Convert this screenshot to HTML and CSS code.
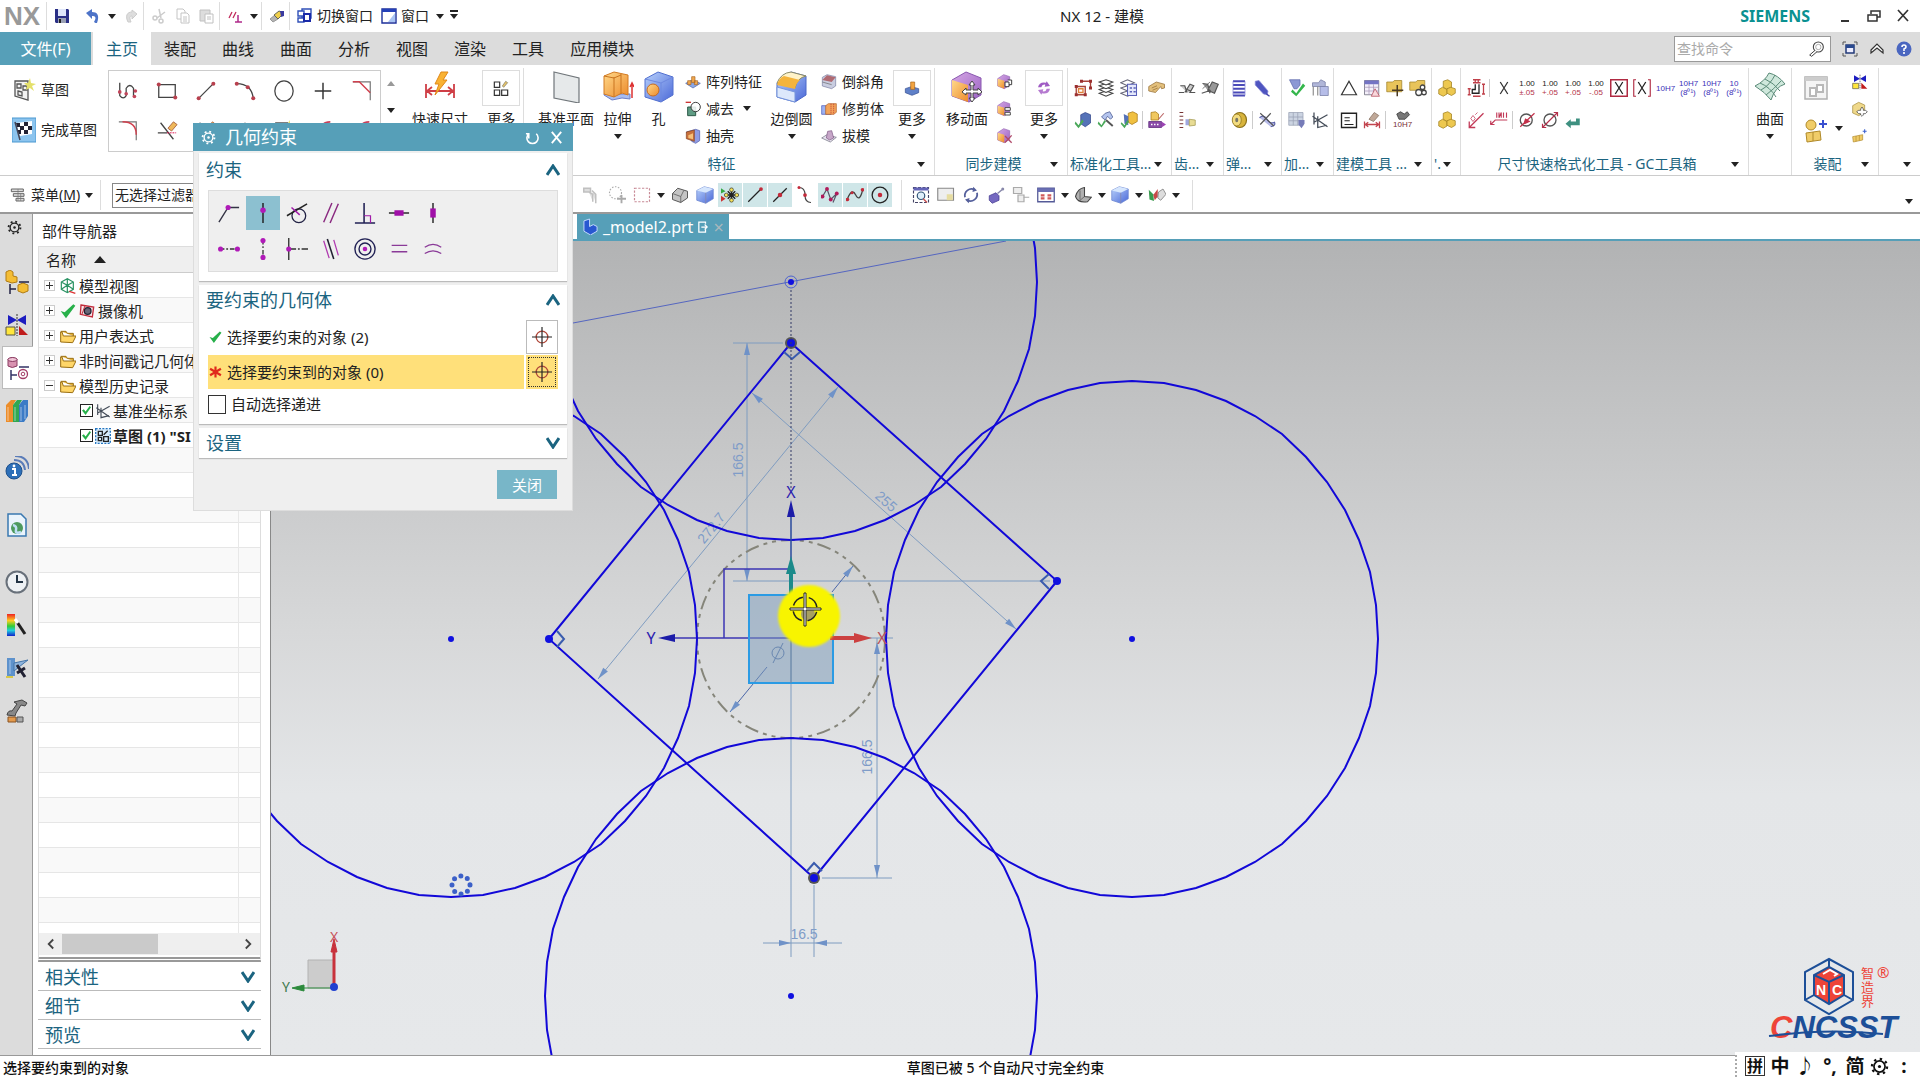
FILE: index.html
```html
<!DOCTYPE html>
<html lang="zh-CN">
<head>
    <meta charset="UTF-8">
    <meta name="viewport" content="width=device-width, initial-scale=1.0">
    <title>NX 12 - 建模</title>
    <link rel="stylesheet" href="styles.css">
</head>
<body>
    <svg class="sprite" aria-hidden="true">
        <defs>
            <linearGradient id="gBlue" x1="0" y1="0" x2="1" y2="1"><stop offset="0" stop-color="#b9d2fb"/><stop offset="1" stop-color="#4a68d8"/></linearGradient>
            <linearGradient id="gOrange" x1="0" y1="0" x2="1" y2="1"><stop offset="0" stop-color="#ffd98a"/><stop offset="1" stop-color="#ec8a2c"/></linearGradient>
            <linearGradient id="gPurple" x1="0" y1="0" x2="1" y2="1"><stop offset="0" stop-color="#d6a8e4"/><stop offset="1" stop-color="#9b62c4"/></linearGradient>
            <linearGradient id="gRainbow" x1="0" y1="0" x2="0" y2="1"><stop offset="0" stop-color="#e22"/><stop offset=".3" stop-color="#fc2"/><stop offset=".55" stop-color="#3c3"/><stop offset=".75" stop-color="#2cd"/><stop offset="1" stop-color="#12c"/></linearGradient>
        </defs>
        <symbol id="i-save" viewBox="0 0 16 16"><path d="M1 1h13l1 1v13H2l-1-1z" fill="#2a2f86"/><path d="M4 1h8v7H4z" fill="#dfe6fa"/><path d="M4 10h8v5H4z" fill="#9aa0b4"/><path d="M5 11h2v4H5z" fill="#222"/></symbol>
        <symbol id="i-undo" viewBox="0 0 16 16"><path d="M1 5l6-4v3c5 0 8 3 5 11-1 0-2 0-3-1 3-5 1-6-2-6v3z" fill="#4d73c8"/></symbol>
        <symbol id="i-redo" viewBox="0 0 16 16"><path d="M14 6L9 2v2C4 4 2 8 5 14h3C6 9 7 8 9 8v3z" fill="#ddd" stroke="#ccc"/></symbol>
        <symbol id="i-cut" viewBox="0 0 16 16"><g fill="none" stroke="#ccc" stroke-width="1.5"><path d="M8 1l2 9M14 4L6 10"/><circle cx="4" cy="10" r="2"/><circle cx="10" cy="13" r="2"/></g></symbol>
        <symbol id="i-copy" viewBox="0 0 16 16"><g fill="#fff" stroke="#c4c4c4"><path d="M2 1h6l2 2v8H2z"/><path d="M6 5h6l2 2v8H6z"/><path d="M8 9h4M8 11h4M8 13h4"/></g></symbol>
        <symbol id="i-paste" viewBox="0 0 16 16"><g fill="#ddd" stroke="#c0c0c0"><path d="M1 2h10v11H1z"/><path d="M6 6h8v9H6z" fill="#fff"/><path d="M8 9h4M8 11h4"/></g></symbol>
        <symbol id="i-con" viewBox="0 0 16 16"><path d="M2 10l3-6M6 10l3-6" stroke="#c22c5c" stroke-width="1.3"/><path d="M8 14h7M11 14V7" stroke="#b02a8a" stroke-width="1.5"/></symbol>
        <symbol id="i-pen" viewBox="0 0 16 16"><path d="M1 11l5-4 3 4-5 3z" fill="#b4b4b4" stroke="#999"/><path d="M5 7l5-4 5 2-6 6z" fill="#efcf4a" stroke="#665"/><path d="M11 3h4v5l-3 1z" fill="#3a3aa0"/></symbol>
        <symbol id="i-switch" viewBox="0 0 16 16"><g fill="#fff" stroke="#3050b8" stroke-width="1.4"><path d="M5 1h9v9H5z"/><path d="M1 3h6v5H1zM1 10h6v4H1z"/><path d="M7 6h6v7H7z" stroke="#1a2aa8" stroke-width="2"/></g></symbol>
        <symbol id="i-window" viewBox="0 0 16 16"><path d="M1 1h14v14H1z" fill="#fff" stroke="#1c2f9a" stroke-width="1.4"/><path d="M1 1h14v3H1z" fill="#2440b8"/><path d="M14 5v9H7z" fill="#a8c4f4"/></symbol>

        <symbol id="i-sketch" viewBox="0 0 24 24"><g fill="#f2f2f2" stroke="#555" stroke-width="1.3"><path d="M3 3h13v19L3 18z"/><path d="M5 6h4v4H5zM11 8h4v4h-4zM6 13l4 1v4l-4-1z"/></g><path d="M18 0l1 5 5 1-4 2 2 5-4-3-4 2 1-4-3-3 4 0z" fill="#e4e06a"/></symbol>
        <symbol id="i-finish" viewBox="0 0 24 24"><path d="M0 0h24v24H0z" fill="#8cc4ee"/><path d="M0 0h24v24H0z" fill="none" stroke="#4b98d0"/><path d="M4 5l16-2v13L8 18z" fill="#fff"/><path d="M4 5l4 0v4H5zM12 4h4v4h-4zM8 8h4v4H8zM16 8h4v4h-4zM5 12h4v4H7zM12 12h4v4h-4z" fill="#223"/><path d="M3 4l5 18" stroke="#445" stroke-width="1.5"/></symbol>
        <symbol id="i-profile" viewBox="0 0 24 24"><path d="M3 3v14q4 5 7 0V9q4-6 8 0v9" fill="none" stroke="#444" stroke-width="1.4"/><g fill="#c2455a"><circle cx="3" cy="13" r="2"/><circle cx="10" cy="15" r="2"/><circle cx="19" cy="18" r="2"/><circle cx="20" cy="12" r="2"/></g></symbol>
        <symbol id="i-rect" viewBox="0 0 24 24"><path d="M3 5h18v14H3z" fill="none" stroke="#444" stroke-width="1.4"/><circle cx="3" cy="5" r="2.2" fill="#b8404e"/><circle cx="21" cy="19" r="2.2" fill="#b8404e"/></symbol>
        <symbol id="i-line" viewBox="0 0 24 24"><path d="M4 20L20 4" stroke="#444" stroke-width="1.4"/><circle cx="4" cy="20" r="2.2" fill="#b8404e"/><circle cx="20" cy="4" r="2.2" fill="#b8404e"/></symbol>
        <symbol id="i-arc" viewBox="0 0 24 24"><path d="M3 4q16 0 18 16" fill="none" stroke="#444" stroke-width="1.4"/><g fill="#b8404e"><circle cx="3" cy="4" r="2.2"/><circle cx="15" cy="8" r="2.2"/><circle cx="21" cy="20" r="2.2"/></g></symbol>
        <symbol id="i-circle" viewBox="0 0 24 24"><ellipse cx="12" cy="12" rx="10" ry="11" fill="none" stroke="#444" stroke-width="1.4"/></symbol>
        <symbol id="i-plus" viewBox="0 0 24 24"><path d="M12 3v18M3 12h18" stroke="#333" stroke-width="1.6"/></symbol>
        <symbol id="i-chamfer" viewBox="0 0 24 24"><path d="M2 2h19v20" fill="none" stroke="#777" stroke-width="1.3"/><path d="M2 2h7l12 12" fill="none" stroke="#d0404e" stroke-width="1.6"/></symbol>
        <symbol id="i-fillet" viewBox="0 0 24 24"><path d="M2 2h19v20" fill="none" stroke="#777" stroke-width="1.3"/><path d="M6 2q15 0 15 14" fill="none" stroke="#d0404e" stroke-width="1.6"/></symbol>
        <symbol id="i-trim" viewBox="0 0 24 24"><path d="M2 14h10M5 3l14 18" stroke="#444" stroke-width="1.4"/><path d="M12 14h10" stroke="#d04" stroke-dasharray="2 1"/><path d="M13 9l6-7 4 3-6 7z" fill="#efb85a" stroke="#a64"/></symbol>
        <symbol id="i-conic" viewBox="0 0 24 24"><path d="M2 20Q8 2 20 2" fill="none" stroke="#c8405a" stroke-width="2"/></symbol>
        <symbol id="i-quick" viewBox="0 0 32 32"><path d="M2 13v14M30 13v14M3 20h26M8 16l-5 4 5 4M24 16l5 4-5 4" fill="none" stroke="#cf3e46" stroke-width="1.8"/><path d="M17 1h7l-5 8h4L11 24l4-11h-4z" fill="#f9b233" stroke="#e08818"/></symbol>
        <symbol id="i-more" viewBox="0 0 24 24"><g fill="none" stroke="#333" stroke-width="1.800"><path d="M2 3h8v8H2zM2 15h8v8H2zM13 15h9v8h-9z"/></g><path d="M14 9l5-7 3 2-6 7z" fill="#e8c468" stroke="#776"/></symbol>
        <symbol id="i-plane" viewBox="0 0 32 32"><path d="M4 1l25 6v25L4 27z" fill="#e6e9ea" stroke="#70767a" stroke-width="1.2"/></symbol>
        <symbol id="i-extrude" viewBox="0 0 32 32"><path d="M2 24l8 5 10-2 8 1 0-5H2z" fill="#a9bdf0" stroke="#6f80c8"/><path d="M2 5l10-4 14 3v20l-6-2-8 4-10-3z" fill="url(#gOrange)" stroke="#d27a22"/><path d="M12 6v20M19 3v20M2 5l10 2 7-3" fill="none" stroke="#c97420"/><path d="M30 27V13M28 16l2-4 2 4" stroke="#d33" fill="none" stroke-width="1.500"/></symbol>
        <symbol id="i-hole" viewBox="0 0 32 32"><path d="M2 8l13-7 15 5v18l-12 7L2 26z" fill="url(#gBlue)" stroke="#5270d0"/><path d="M2 8l16 4 12-6M18 12v19" fill="none" stroke="#6d88e0"/><circle cx="10" cy="19" r="6" fill="url(#gOrange)" stroke="#c66b22"/></symbol>
        <symbol id="i-pattern" viewBox="0 0 24 24"><path d="M1 14l10-5 12 5-11 7z" fill="#8aa8e8" stroke="#4d64a8"/><path d="M4 10h5v6H4zM10 4h5v9h-5zM14 10h5v6h-5z" fill="#f0a850" stroke="#a86420"/></symbol>
        <symbol id="i-subtract" viewBox="0 0 24 24"><path d="M1 2h8" stroke="#c33" stroke-width="2"/><path d="M4 9h12v13H4z" fill="#5f9c84" stroke="#2d5a48" stroke-width="1.5"/><circle cx="16" cy="9" r="7" fill="#fff" fill-opacity=".85" stroke="#333" stroke-width="1.4"/></symbol>
        <symbol id="i-shell" viewBox="0 0 24 24"><path d="M2 6l14-4 6 2v15l-6 4-6-3z" fill="#8f9ce4" stroke="#4a56a8"/><path d="M2 6l12-3v17L2 16z" fill="#c8703a" stroke="#84401c"/><path d="M5 11l7-3v9l-7-2z" fill="#f6c078"/></symbol>
        <symbol id="i-edge" viewBox="0 0 32 32"><path d="M1 12l14-11 15 4v19l-11 7L1 26z" fill="url(#gBlue)" stroke="#4a68c8"/><path d="M1 12Q5 2 15 1l15 4q-9 2-11 12z" fill="#fff3c8" stroke="#8a8a66"/><path d="M1 14q2-7 7-9l16 4q-4 3-5 9z" fill="#f4b43c"/><path d="M1 16l18 5v10L1 26z" fill="#dce8fb" stroke="#7796dc"/></symbol>
        <symbol id="i-chamf" viewBox="0 0 24 24"><path d="M2 5l7-4 13 3v14l-6 4-14-4z" fill="#c9cde0" stroke="#777ca0"/><path d="M2 9L9 2l13 3-6 7z" fill="#b06a72"/><path d="M2 12l14 4" stroke="#666"/></symbol>
        <symbol id="i-body" viewBox="0 0 24 24"><path d="M1 7h14v13H1z" fill="#9db2f2" stroke="#4454b8"/><path d="M7 7l4-3h12v13l-4 3H7z" fill="#f3a45a" stroke="#b05c20"/><path d="M15 4v16M19 4v16" stroke="#b33" stroke-dasharray="2 1"/></symbol>
        <symbol id="i-draft" viewBox="0 0 24 24"><path d="M1 15l8-5 14 4-9 7z" fill="#e8e4f0" stroke="#667"/><path d="M8 15l2-10 6-1 3 11-6 3z" fill="#c6a6c8" stroke="#7a5580"/></symbol>
        <symbol id="i-featmore" viewBox="0 0 24 24"><path d="M2 13l9-3 11 3v6l-10 4-10-4z" fill="#5f80c8" stroke="#30488c"/><path d="M10 3h6v11h-6z" fill="#f3a440" stroke="#a86418"/></symbol>
        <symbol id="i-moveface" viewBox="0 0 32 32"><path d="M1 9l14-8 15 6v17l-12 7L1 25z" fill="url(#gPurple)" stroke="#8a58b0"/><path d="M1 9l16 5v17L1 25z" fill="url(#gOrange)"/><path d="M21 10l3 4h-2v5h5v-2l4 4-4 3v-2h-5v5h2l-3 4-3-4h2v-5h-5v2l-4-3 4-4v2h5v-5h-2z" fill="#fff" stroke="#444"/></symbol>
        <symbol id="i-face2" viewBox="0 0 24 24"><path d="M1 7l9-6 9 3v13l-8 5-10-4z" fill="url(#gPurple)" stroke="#9464b4"/><path d="M1 7l10 3v12L1 18z" fill="url(#gOrange)"/><path d="M12 12h6v7h-6zM16 9h6v7h-4" fill="#fff" stroke="#333" stroke-width="1.4"/></symbol>
        <symbol id="i-face3" viewBox="0 0 24 24"><path d="M1 7l9-6 9 3v13l-8 5-10-4z" fill="url(#gPurple)" stroke="#9464b4"/><path d="M1 7l10 3v12L1 18z" fill="url(#gOrange)"/><path d="M12 10h8v4h-8zM12 17h8v4h-8z" fill="#fff" stroke="#444" stroke-width="1.4"/></symbol>
        <symbol id="i-face4" viewBox="0 0 24 24"><path d="M1 7l9-6 9 3v13l-8 5-10-4z" fill="url(#gPurple)" stroke="#9464b4"/><path d="M1 7l10 3v12L1 18z" fill="url(#gOrange)"/><path d="M12 12l10 10M22 11L12 22" stroke="#b04a6a" stroke-width="2"/></symbol>
        <symbol id="i-sync" viewBox="0 0 24 24"><path d="M3 11q2-9 12-7l1-2 5 7-8 1 1-3q-5-1-6 4z" fill="#a05cc4"/><path d="M21 13q-2 9-12 7l-1 2-5-7 8-1-1 3q5 1 6-4z" fill="#b57ad0"/></symbol>

        <symbol id="i-std" viewBox="0 0 24 24"><g fill="none" stroke="#a8443a" stroke-width="1.800"><path d="M3 10h12v11H3z"/><path d="M10 3h12v9"/><path d="M6 13h6v5H6z" stroke="#e0803a"/></g><g fill="#9a2f2f"><path d="M1 8h4v4H1zM13 19h4v4h-4zM8 1h4v4H8zM20 1h4v4h-4zM20 10h4v4h-4zM1 19h4v4H1z"/></g></symbol>
        <symbol id="i-layers" viewBox="0 0 24 24"><g fill="#fff" stroke="#444" stroke-width="1.5"><path d="M3 19l9-3 9 3-9 4z"/><path d="M3 14l9-3 9 3-9 4z"/><path d="M3 9l9-3 9 3-9 4z"/><path d="M3 4l9-3 9 3-9 4z"/></g></symbol>
        <symbol id="i-layers2" viewBox="0 0 24 24"><g fill="#fff" stroke="#667" stroke-width="1.5"><path d="M1 19l9-3 9 3-9 4zM1 12l9-3 9 3-9 4zM1 5l9-4 9 4-9 4z"/></g><path d="M10 7h12v15H10z" fill="#e4e8fb" stroke="#5a60b8" stroke-width="1.4"/><path d="M13 12h3M18 12h3M13 17h3M18 17h3" stroke="#5a60b8" stroke-width="2"/></symbol>
        <symbol id="i-hand" viewBox="0 0 24 24"><path d="M1 10l10-6 11 3v5l-4 1-1-3-7 8-9-2z" fill="#e3c07c" stroke="#97703a"/><path d="M5 12l7-3M6 15l7-3" stroke="#97703a"/></symbol>
        <symbol id="i-attr1" viewBox="0 0 24 24"><path d="M9 5l6-3 7 3v11l-7 5-6-4z" fill="#5572b8" stroke="#34488c"/><path d="M2 14l4 5 5-8 2 3-7 9-5-6z" fill="#4aa85a"/></symbol>
        <symbol id="i-attr2" viewBox="0 0 24 24"><path d="M6 8l5-5 6-2 4 7-3 3-4-4-3 5z" fill="#b4c4ee" stroke="#44548c"/><path d="M12 12l9 8" stroke="#555" stroke-width="2.500"/><path d="M2 14l4 5 4-7 2 2-6 8-5-5z" fill="#4aa85a"/></symbol>
        <symbol id="i-attr3" viewBox="0 0 24 24"><path d="M11 3l6-2 6 3v10l-7 4-5-3z" fill="#f0c040" stroke="#a87a18"/><path d="M5 4l6 3v12l-5-2z" fill="#5572b8"/><path d="M2 15l4 4 4-7 2 2-6 9-5-6z" fill="#4aa85a"/></symbol>
        <symbol id="i-export" viewBox="0 0 24 24"><path d="M4 2l6-1 4 3v8H4z" fill="#f0c860" stroke="#a87a18"/><path d="M14 11l7-8" stroke="#b66" stroke-width="1.500"/><path d="M1 14h17v8H1z" fill="#8a4aa8" stroke="#5a2a78"/><path d="M4 18h2M8 18h2M12 18h2" stroke="#fff" stroke-width="2"/><path d="M18 14l6 4-6 4z" fill="#9c44b4"/></symbol>
        <symbol id="i-gear1" viewBox="0 0 24 24"><path d="M1 18h7M3 9h6l3 9M9 18l7-11 5 2-5 9h7M12 14l5 2" fill="#ccc" stroke="#555" stroke-width="1.600"/></symbol>
        <symbol id="i-gear2" viewBox="0 0 24 24"><path d="M1 19l12-4M2 6l7 1 3 12M9 15l6-11 8 3-5 12z" fill="#999" stroke="#555" stroke-width="1.600"/><path d="M2 13L12 4" stroke="#555"/></symbol>
        <symbol id="i-gear3" viewBox="0 0 24 24"><path d="M2 2h5M2 7h5M2 12h5M2 17h5M2 22h5" stroke="#733" stroke-width="1.600"/><path d="M10 11h6v8h-6z" fill="#a0a8e0"/><path d="M15 11l8 1v7l-8 1z" fill="#e8dc94" stroke="#a39a52"/></symbol>
        <symbol id="i-spring" viewBox="0 0 24 24"><path d="M4 3h16M4 8h16M4 13h16M4 18h16M4 22h16" stroke="#4a4ab8" stroke-width="2.600"/><path d="M4 3v19M20 3v19" stroke="#8a8ad8"/></symbol>
        <symbol id="i-spring2" viewBox="0 0 24 24"><path d="M3 3l5-1 12 14-1 5-5-1L3 8z" fill="#4f55c0" stroke="#8a8ad8"/><path d="M18 20l4 3" stroke="#44a" stroke-width="2"/></symbol>
        <symbol id="i-coil" viewBox="0 0 24 24"><ellipse cx="13" cy="12" rx="9" ry="10" fill="#d8b43c" stroke="#8a701a" stroke-width="1.600"/><ellipse cx="9" cy="12" rx="6" ry="8" fill="#f3dc80" stroke="#8a701a"/><ellipse cx="9" cy="12" rx="2" ry="3" fill="#776"/></symbol>
        <symbol id="i-cutspring" viewBox="0 0 24 24"><path d="M2 9q6-5 10 2t10 4q2 5-5 6" fill="#b8bce8" stroke="#5a60a8" stroke-width="1.500"/><path d="M3 3l18 17M17 3L3 18" stroke="#555" stroke-width="1.500"/></symbol>
        <symbol id="i-mach" viewBox="0 0 24 24"><path d="M2 1h14v7l-4 5-4 0z" fill="#8c98d4" stroke="#626cae"/><path d="M6 14l5 5 9-13 3 3-12 14-7-6z" fill="#34b64c"/></symbol>
        <symbol id="i-mach2" viewBox="0 0 24 24"><path d="M2 5h8l3-4 6 3v6H2z" fill="#b0b6d8" stroke="#767ca4"/><path d="M3 10v12M9 10v12" stroke="#888" stroke-width="1.500"/><path d="M12 10h11v12H12z" fill="#b6bde8" stroke="#767ca4"/></symbol>
        <symbol id="i-grid" viewBox="0 0 24 24"><path d="M1 2h19v17H1z" fill="#ccd4e2" stroke="#99a2b4"/><path d="M1 8h19M1 13h19M7 2v17M13 2v17" stroke="#99a2b4"/><path d="M14 12h8v5l-4 6-4-5z" fill="#767cb8"/></symbol>
        <symbol id="i-csys" viewBox="0 0 24 24"><path d="M4 2v16M4 15L22 5M2 7l20 14M9 7v15l12-3" fill="none" stroke="#444c58" stroke-width="1.700"/></symbol>
        <symbol id="i-tri" viewBox="0 0 24 24"><path d="M12 3l10 18H2z" fill="none" stroke="#333" stroke-width="1.600"/></symbol>
        <symbol id="i-sheet" viewBox="0 0 24 24"><path d="M2 2h19v19H2z" fill="#f4f0fa" stroke="#667"/><path d="M2 2h19v5H2z" fill="#7474c4"/><path d="M2 11h19M2 16h19M8 7v14M14 7v14" stroke="#a89ab8"/><path d="M16 13l6 10H11z" fill="#f8d8dc" stroke="#b4485a"/></symbol>
        <symbol id="i-fplus" viewBox="0 0 24 24"><path d="M1 4h8l2-2h10v15H1z" fill="#e8c45a" stroke="#a2832a"/><path d="M15 8v15M8 15h15" stroke="#4a3a22" stroke-width="2"/></symbol>
        <symbol id="i-fgear" viewBox="0 0 24 24"><path d="M1 4h8l2-2h10v13H1z" fill="#e8c45a" stroke="#a2832a"/><g fill="#fff" stroke="#444" stroke-width="1.700"><circle cx="13" cy="18" r="4"/><circle cx="20" cy="18" r="3"/><circle cx="18" cy="11" r="3"/></g></symbol>
        <symbol id="i-note" viewBox="0 0 24 24"><path d="M2 3h20v19H2z" fill="#fff" stroke="#222" stroke-width="1.800"/><path d="M6 9h7M6 13h7M6 18h12" stroke="#222" stroke-width="1.500"/></symbol>
        <symbol id="i-dimh" viewBox="0 0 24 24"><path d="M2 14v9M22 14v9M3 18h18M7 15l-4 3 4 3M17 15l4 3-4 3" fill="none" stroke="#c2444e" stroke-width="1.700"/><path d="M8 11l7-9 6 4-7 8z" fill="#c0a898" stroke="#857060"/></symbol>
        <symbol id="i-fit" viewBox="0 0 24 12"><path d="M5 4l5-3 5 3 4-3 3 4-6 6H8z" fill="#777" stroke="#333"/></symbol>
        <symbol id="i-cubes" viewBox="0 0 24 24"><g fill="#edc850" stroke="#a08020"><path d="M7 3l6-2 5 3v7l-6 3-5-3z"/><path d="M1 14l5-3 6 3v6l-5 3-6-3z"/><path d="M12 13l5-2 6 2v6l-5 3-6-3z"/></g></symbol>
        <symbol id="i-bracket" viewBox="0 0 24 24"><g fill="none" stroke="#c0404a" stroke-width="1.700"><path d="M8 1h10M8 5h10M11 1v4M15 1v4M1 13h4M1 21h4M3 13v8M20 7h4M20 20h4M22 7v13M8 23h10"/></g><path d="M11 7v7H7v5h9V7" fill="none" stroke="#222" stroke-width="1.700"/></symbol>
        <symbol id="i-xx" viewBox="0 0 24 24"><path d="M7 4l10 16M17 4L7 20" stroke="#333" stroke-width="1.700"/></symbol>
        <symbol id="i-xbox" viewBox="0 0 24 24"><path d="M1 1h22v22H1z" fill="none" stroke="#b02a42" stroke-width="2"/><path d="M7 4l10 16M17 4L7 20" stroke="#222" stroke-width="1.700"/></symbol>
        <symbol id="i-xpar" viewBox="0 0 24 24"><path d="M4 1H1v22h3M20 1h3v22h-3" fill="none" stroke="#b02a42" stroke-width="1.500"/><path d="M7 4l10 16M17 4L7 20" stroke="#222" stroke-width="1.700"/></symbol>
        <symbol id="i-leader" viewBox="0 0 24 24"><path d="M4 21L22 3M3 14v8h8" fill="none" stroke="#c23a58" stroke-width="1.700"/><path d="M5 10l3-4 3 4-3 4zM11 5l3-3" fill="none" stroke="#c23a58"/></symbol>
        <symbol id="i-leader2" viewBox="0 0 24 24"><path d="M1 18l6-6h16M1 13v5h5M9 2v7M12 2v7l3-7v7M18 2v7M22 2v7" fill="none" stroke="#c23a58" stroke-width="1.500"/></symbol>
        <symbol id="i-dia" viewBox="0 0 24 24"><circle cx="11" cy="12" r="8" fill="none" stroke="#555" stroke-width="1.800"/><path d="M3 21L22 3M8 17l2-6 5 3z" stroke="#c2304a" fill="#c2304a" stroke-width="1.600"/></symbol>
        <symbol id="i-dia2" viewBox="0 0 24 24"><circle cx="12" cy="12" r="8" fill="none" stroke="#555" stroke-width="1.800"/><path d="M2 22L22 2M17 2h5v5M2 17v5h5" stroke="#b2304a" fill="none" stroke-width="1.600"/></symbol>
        <symbol id="i-turn" viewBox="0 0 24 24"><path d="M2 17l7-6v3h7v-4h5v9H9v4z" fill="#3e9080"/></symbol>
        <symbol id="i-surface" viewBox="0 0 32 32"><path d="M1 15Q11 10 15 2q9 2 16 11-10 3-14 16Q11 21 1 15z" fill="#cfe8dc" stroke="#5a8a78"/><path d="M6 12q10 4 16 14M11 8q9 4 15 12M7 19q9-5 14-15M12 24q8-6 15-14" fill="none" stroke="#5a8a78"/></symbol>
        <symbol id="i-asmwin" viewBox="0 0 24 24"><path d="M1 1h22v22H1z" fill="#f4f4f4" stroke="#b0b0b0" stroke-width="1.500"/><path d="M1 1h22v4H1z" fill="#ccc"/><path d="M6 12h6v8H6zM13 9h6v7h-6z" fill="#fff" stroke="#b8b8b8" stroke-width="2"/></symbol>
        <symbol id="i-addcomp" viewBox="0 0 24 24"><g fill="#f0cc68" stroke="#b08a2a"><circle cx="7" cy="6" r="5"/><path d="M2 14l14-2 1 9-14 2z"/><path d="M9 13v9"/></g><path d="M19 1v8M15 5h8" stroke="#3a50d0" stroke-width="2"/></symbol>
        <symbol id="i-mirror" viewBox="0 0 24 24"><path d="M3 2l9 5-9 5zM21 2l-9 5 9 5z" fill="#1c1cc0"/><path d="M12 1v22" stroke="#333" stroke-dasharray="2 1"/><path d="M1 14h9v8H1z" fill="#ffe63c" stroke="#554"/><path d="M14 13l9 9h-9z" fill="#c01c1c"/></symbol>
        <symbol id="i-movecomp" viewBox="0 0 24 24"><path d="M1 7l9-5 9 4v11l-9 5-9-4z" fill="#efd88a" stroke="#a08838"/><path d="M15 9l2 3v2h3l3 2-3 3h-3v2l-2 2-2-2v-2h-3l-3-3 3-2h3v-2z" fill="#fff" stroke="#333"/></symbol>
        <symbol id="i-asmplus" viewBox="0 0 24 24"><path d="M1 13l15-3v8l-14 3z" fill="#f0cc68" stroke="#b08a2a"/><path d="M6 12v8M11 11v8" stroke="#b08a2a"/><path d="M19 2v6M16 5h6" stroke="#3a60d0" stroke-width="1.600"/></symbol>
        <symbol id="i-find" viewBox="0 0 24 24"><circle cx="14" cy="9" r="7.500" fill="#fff" stroke="#444" stroke-width="1.600"/><circle cx="14" cy="9" r="4" fill="none" stroke="#888"/><path d="M9 14l-8 7 3 2 8-7" fill="#fff" stroke="#444" stroke-width="1.500"/></symbol>

        <symbol id="i-menu" viewBox="0 0 24 24"><path d="M2 3h18v4H2zM5 10h16v4H5zM9 17h12v4H9z" fill="#ddd" stroke="#666" stroke-width="1.500"/><path d="M12 3v18M16 10v11" stroke="#777"/></symbol>
        <symbol id="i-dim1" viewBox="0 0 24 24"><path d="M1 3h9v5H1zM12 6l5 5v12M8 8l5 3v10" fill="#ddd" stroke="#c0c0c0" stroke-width="2"/></symbol>
        <symbol id="i-dim2" viewBox="0 0 24 24"><circle cx="10" cy="9" r="8" fill="none" stroke="#aaa" stroke-width="1.500" stroke-dasharray="2 2"/><path d="M18 12v11M12 17h12" stroke="#aaa" stroke-width="2.500"/></symbol>
        <symbol id="i-marq" viewBox="0 0 24 24"><path d="M2 3h20v18H2z" fill="none" stroke="#c88a96" stroke-width="1.600" stroke-dasharray="3 2"/></symbol>
        <symbol id="i-graybox" viewBox="0 0 24 24"><path d="M2 10l7-7 13 4v9l-9 6-11-4z" fill="#c4c4c4" stroke="#555" stroke-width="1.300"/><path d="M2 10l11 4 4-8M13 14v8" fill="none" stroke="#555"/></symbol>
        <symbol id="i-bluebox" viewBox="0 0 24 24"><path d="M1 6l10-5 12 3v13l-10 6L1 19z" fill="url(#gBlue)" stroke="#6a84d0"/><path d="M1 6l12 3 10-5-12-3z" fill="#d6e6fd"/><path d="M13 9v14" stroke="#88a"/></symbol>
        <symbol id="i-snap" viewBox="0 0 24 24"><path d="M0 3l6 4-6 3z" fill="#3a4"/><path d="M0 13l6 4-6 4z" fill="#c33"/><path d="M14 3v18M5 12h18M9 7l10 10M19 7L9 17" stroke="#222" stroke-width="2"/><g fill="#f7e35a" stroke="#443"><circle cx="14" cy="5" r="2.500"/><circle cx="14" cy="19" r="2.500"/><circle cx="7" cy="12" r="2.500"/><circle cx="21" cy="12" r="2.500"/></g></symbol>
        <symbol id="i-end" viewBox="0 0 24 24"><path d="M3 21L20 4" stroke="#222" stroke-width="1.700"/><circle cx="20" cy="4" r="2.500" fill="#c22a3a"/></symbol>
        <symbol id="i-mid" viewBox="0 0 24 24"><path d="M3 21L21 3" stroke="#222" stroke-width="1.700"/><circle cx="12" cy="12" r="3" fill="#c22a3a"/></symbol>
        <symbol id="i-ctrl" viewBox="0 0 24 24"><path d="M4 2q8 0 8 10t8 10" fill="none" stroke="#444" stroke-width="1.600"/><circle cx="4" cy="2" r="2" fill="#c22a3a"/><circle cx="12" cy="12" r="2.500" fill="#c22a3a"/></symbol>
        <symbol id="i-poly" viewBox="0 0 24 24"><path d="M2 14L8 4l5 14 8-8-5 12" fill="none" stroke="#556" stroke-width="1.600"/><g fill="#b01a5a"><circle cx="2" cy="14" r="2.600"/><circle cx="8" cy="4" r="2.600"/><circle cx="13" cy="18" r="2.600"/><circle cx="21" cy="10" r="2.600"/></g></symbol>
        <symbol id="i-curve" viewBox="0 0 24 24"><path d="M2 17Q8 2 13 12t9-6" fill="none" stroke="#444" stroke-width="1.700"/><g fill="#c22a3a"><circle cx="2" cy="18" r="2.400"/><circle cx="8" cy="9" r="2"/><circle cx="22" cy="5" r="2.400"/></g></symbol>
        <symbol id="i-center" viewBox="0 0 24 24"><circle cx="12" cy="12" r="10.500" fill="none" stroke="#222" stroke-width="1.700"/><circle cx="12" cy="12" r="3" fill="#c22a3a"/></symbol>
        <symbol id="i-zoomwin" viewBox="0 0 24 24"><path d="M2 2h20v20H2z" fill="none" stroke="#446" stroke-width="1.500" stroke-dasharray="4 2"/><path d="M2 2h20v4H2z" fill="#6464b8"/><circle cx="12" cy="13" r="5" fill="#dfeffa" stroke="#357" stroke-width="1.600"/><path d="M15 17l5 5" stroke="#c55" stroke-width="2"/></symbol>
        <symbol id="i-layout" viewBox="0 0 24 24"><path d="M1 3h21v16H1z" fill="#eee" stroke="#888" stroke-width="1.500"/><path d="M13 11h8v8h-8z" fill="#e6dca0"/></symbol>
        <symbol id="i-rot" viewBox="0 0 24 24"><path d="M4 15a9 9 0 0 1 13-10M20 9A9 9 0 0 1 7 19" fill="none" stroke="#55609c" stroke-width="2.400"/><path d="M15 1l5 5-6 2zM9 23l-5-5 6-2z" fill="#55609c"/></symbol>
        <symbol id="i-sect" viewBox="0 0 24 24"><path d="M3 13l9-4 4 4v6l-9 4-4-4z" fill="#7468c0" stroke="#463c90"/><path d="M14 10l6-5" stroke="#88a" stroke-width="2"/><circle cx="21" cy="4" r="2" fill="#88a"/></symbol>
        <symbol id="i-comp" viewBox="0 0 24 24"><path d="M2 2h11v8H2zM8 12h8v9H8zM15 15h8" fill="#eee" stroke="#aaa" stroke-width="1.600"/></symbol>
        <symbol id="i-cal" viewBox="0 0 24 24"><path d="M1 3h22v18H1z" fill="#fff" stroke="#555a98" stroke-width="1.700"/><path d="M1 3h22v5H1z" fill="#6a6fb4"/><path d="M5 11h5v3H5zM14 11h5v3h-5zM5 15h5v3H5zM14 15h5v3h-5z" fill="#d05a5a"/></symbol>
        <symbol id="i-cone" viewBox="0 0 24 24"><path d="M2 14Q5 3 14 2v12l9 1-5 6q-13 2-16-7z" fill="#b0b0b0" stroke="#444" stroke-width="1.400"/><path d="M14 14l-7 6M8 6v12" stroke="#555"/></symbol>
        <symbol id="i-view" viewBox="0 0 24 24"><path d="M1 5l6 6 1 9-6-2z" fill="#3a9c50"/><path d="M7 12l6-8v10l-4 5z" fill="#c84848"/><path d="M14 8l6-4 4 7-7 8-4-3z" fill="#ddd" stroke="#777"/></symbol>

        <symbol id="i-gearset" viewBox="0 0 24 24"><circle cx="12" cy="12" r="7" fill="none" stroke="currentColor" stroke-width="2.200"/><circle cx="12" cy="12" r="9.500" fill="none" stroke="currentColor" stroke-width="3" stroke-dasharray="3 4.460"/><circle cx="12" cy="12" r="2" fill="currentColor"/></symbol>
        <symbol id="i-asmnav" viewBox="0 0 24 24"><path d="M1 2l4-2 3 2v4l4 1v5l-5 1-6-2zM13 15l5-2 5 2v6l-5 2-5-2z" fill="#f4bd35" stroke="#b07c14"/><path d="M5 14v10M5 19h6M14 12h10" stroke="#224" stroke-width="1.500"/></symbol>
        <symbol id="i-partnav" viewBox="0 0 24 24"><path d="M2 3q4-3 9 0v7q-5 3-9 0z" fill="#d892b0" stroke="#8a3c62"/><ellipse cx="6.500" cy="3.500" rx="4.500" ry="2" fill="#f0c4d6" stroke="#8a3c62"/><path d="M5 14v10M5 19h6M13 11h10" stroke="#336" stroke-width="1.500"/><circle cx="17" cy="18" r="4.500" fill="#fff" stroke="#a23c66" stroke-width="1.300"/><circle cx="17" cy="18" r="1.800" fill="none" stroke="#a23c66"/></symbol>
        <symbol id="i-books" viewBox="0 0 24 24"><path d="M1 6l5-5h5l-3 5v17H1z" fill="#ec8d2a"/><path d="M8 6l4-5h5l-3 5v17H8z" fill="#31a852"/><path d="M14 6l4-5h5v16l-4 6h-5z" fill="#3b7bc6"/><path d="M3 8v14M10 8v14M16 8v14M20 6v14" stroke="#fff" stroke-opacity=".5"/></symbol>
        <symbol id="i-info" viewBox="0 0 24 24"><circle cx="9" cy="15" r="8" fill="#2d6fb8" stroke="#1d508c"/><path d="M7 13h3v6h2M7 19h2" stroke="#fff" stroke-width="2" fill="none"/><circle cx="9" cy="10" r="1.400" fill="#fff"/><path d="M9 4q10 0 11 10M10 0q13 0 14 13" fill="none" stroke="#5a7cb8" stroke-width="2"/></symbol>
        <symbol id="i-web" viewBox="0 0 24 24"><path d="M3 1h13l5 5v17H3z" fill="#eaf4fc" stroke="#3a78b0" stroke-width="1.500"/><circle cx="12" cy="15" r="6" fill="#4d9a5e"/><path d="M8 12q4 1 3 5t5 2" stroke="#bfe0f6" stroke-width="2.500" fill="none"/></symbol>
        <symbol id="i-clock" viewBox="0 0 24 24"><circle cx="12" cy="12" r="10.500" fill="#eef1f4" stroke="#68707a" stroke-width="2"/><path d="M12 5v7h6" fill="none" stroke="#234" stroke-width="2"/></symbol>
        <symbol id="i-wand" viewBox="0 0 24 24"><path d="M2 1h8v22H2z" fill="url(#gRainbow)"/><path d="M12 9l8 12" stroke="#222" stroke-width="3"/><path d="M10 6l3 4" stroke="#fff" stroke-width="3"/></symbol>
        <symbol id="i-roles" viewBox="0 0 24 24"><path d="M2 2h8v18H2z" fill="#5e92cc"/><path d="M5 4v14" stroke="#a8c8ec"/><path d="M9 7l14-3-4 3-10 8z" fill="#8fb4dc" stroke="#4474a8"/><path d="M12 9l8 12M20 12l-8 5" stroke="#223" stroke-width="3"/><path d="M1 21h7" stroke="#d8c84a" stroke-width="2"/></symbol>
        <symbol id="i-robot" viewBox="0 0 24 24"><path d="M2 16q1-5 5-4l5-7-3-2 8-2 5 3-2 3-4-1-5 8-1 3z" fill="#888" stroke="#444"/><path d="M3 18h8v5H3z" fill="#e39a4c" stroke="#8a5320"/><path d="M12 18h6v5h-6z" fill="#aaa" stroke="#555"/></symbol>
        <symbol id="i-mview" viewBox="0 0 24 24"><path d="M2 6l9-5 9 5v11l-9 5-9-5zM11 1v21M2 6l9 5 9-5M2 17l9-6 9 6" fill="none" stroke="#2c9465" stroke-width="1.800"/><path d="M14 20l9 3" stroke="#d33" stroke-width="2"/></symbol>
        <symbol id="i-check" viewBox="0 0 24 24"><path d="M1 12l6 2L20 2l3 2L9 23z" fill="#27b04a"/></symbol>
        <symbol id="i-cam" viewBox="0 0 24 24"><path d="M3 3l19 3-2 15L2 17z" fill="#f7e6e8" stroke="#c22c3c" stroke-width="2"/><circle cx="13" cy="12" r="5" fill="#667" stroke="#223" stroke-width="2"/><path d="M4 18L9 4" stroke="#c22c3c" stroke-width="1.500"/></symbol>
        <symbol id="i-folder" viewBox="0 0 24 24"><path d="M1 5h8l2 3h9v4" fill="#e8b53a" stroke="#9a6f14" stroke-width="1.500"/><path d="M1 21V6h2l2 6h19l-5 10z" fill="#ffd668" stroke="#9a6f14" stroke-width="1.500"/></symbol>
        <symbol id="i-sk" viewBox="0 0 24 24"><path d="M1 1h22v22H1z" fill="#d6ebfb" stroke="#2676c0" stroke-width="2" stroke-dasharray="3 2"/><path d="M5 5h6v6H5zM5 14h5v5H5zM13 13h7v7h-7zM13 10l6-6" fill="none" stroke="#222" stroke-width="2"/></symbol>
        <symbol id="i-star" viewBox="0 0 12 12"><path d="M6 1v10M1 3l10 6M11 3L1 9" stroke="#e02a1c" stroke-width="2"/></symbol>

        <symbol id="c-coin" viewBox="0 0 24 24"><path d="M1 22L11 6h12" fill="none" stroke="#334" stroke-width="1.500"/><circle cx="11" cy="6" r="2.800" fill="#b01ab8"/></symbol>
        <symbol id="c-on" viewBox="0 0 24 24"><path d="M12 1v22" stroke="#222" stroke-width="1.600"/><circle cx="12" cy="9" r="3" fill="#b01ab8"/></symbol>
        <symbol id="c-tan" viewBox="0 0 24 24"><circle cx="14" cy="15" r="7.500" fill="none" stroke="#224" stroke-width="1.400"/><path d="M1 15L23 2" stroke="#222" stroke-width="1.600"/><path d="M6 6l9 8" stroke="#a01aa8" stroke-width="1.600"/></symbol>
        <symbol id="c-par" viewBox="0 0 24 24"><path d="M4 22L13 1M11 23l9-21" stroke="#8a2a80" stroke-width="1.600"/></symbol>
        <symbol id="c-perp" viewBox="0 0 24 24"><path d="M11 1v22M1 23h22" stroke="#225" stroke-width="1.700"/><path d="M11 15h7v8" fill="none" stroke="#a01aa8" stroke-width="1.300"/></symbol>
        <symbol id="c-hor" viewBox="0 0 24 24"><path d="M1 12h22" stroke="#333" stroke-width="1.700"/><path d="M7 9h10v6H7z" fill="#a010a8"/></symbol>
        <symbol id="c-ver" viewBox="0 0 24 24"><path d="M12 1v22" stroke="#333" stroke-width="1.700"/><path d="M9 7h6v10H9z" fill="#a010a8"/></symbol>
        <symbol id="c-hal" viewBox="0 0 24 24"><path d="M2 12h20" stroke="#333" stroke-width="1.400" stroke-dasharray="5 2 2 2"/><circle cx="2.800" cy="12" r="2.800" fill="#b01ab8"/><circle cx="21.200" cy="12" r="2.800" fill="#b01ab8"/></symbol>
        <symbol id="c-val" viewBox="0 0 24 24"><path d="M12 2v20" stroke="#333" stroke-width="1.400" stroke-dasharray="5 2 2 2"/><circle cx="12" cy="2.800" r="2.800" fill="#b01ab8"/><circle cx="12" cy="21.200" r="2.800" fill="#b01ab8"/></symbol>
        <symbol id="c-midp" viewBox="0 0 24 24"><path d="M3 0v24" stroke="#333" stroke-width="1.500"/><path d="M3 12h21" stroke="#333" stroke-width="1.400" stroke-dasharray="8 2 2 2"/><circle cx="3" cy="12" r="2.800" fill="#b01ab8"/></symbol>
        <symbol id="c-col" viewBox="0 0 24 24"><path d="M4 3l6 19M15 2l5 17" stroke="#b03ab0" stroke-width="1.400"/><path d="M8 1l7 22" stroke="#223" stroke-width="1.700"/></symbol>
        <symbol id="c-conc" viewBox="0 0 24 24"><g fill="none" stroke="#225" stroke-width="1.500"><circle cx="12" cy="12" r="11"/><circle cx="12" cy="12" r="6.500"/></g><circle cx="12" cy="12" r="2.500" fill="#b01ab8"/></symbol>
        <symbol id="c-eq" viewBox="0 0 24 24"><path d="M4 8h17M4 15h17" stroke="#8a3a98" stroke-width="1.400"/></symbol>
        <symbol id="c-eqr" viewBox="0 0 24 24"><path d="M3 10q9-6 18 0M3 17q9-6 18 0" fill="none" stroke="#8a3a98" stroke-width="1.400"/></symbol>
        <symbol id="i-target" viewBox="0 0 24 24"><circle cx="12" cy="12" r="7" fill="none" stroke="#b0483a" stroke-width="1.600"/><path d="M12 0v24M0 12h24" stroke="#222" stroke-width="1.400"/></symbol>
    </svg>

    <div class="app">
        <header class="titlebar">
            <span class="logo">NX</span>
            <button class="qa sep save" aria-label="保存"><svg><use href="#i-save"/></svg></button>
            <button class="qa" aria-label="撤销"><svg><use href="#i-undo"/></svg></button>
            <i class="caret"></i>
            <button class="qa" aria-label="重做"><svg><use href="#i-redo"/></svg></button>
            <button class="qa sep" aria-label="剪切"><svg><use href="#i-cut"/></svg></button>
            <button class="qa" aria-label="复制"><svg><use href="#i-copy"/></svg></button>
            <button class="qa" aria-label="粘贴"><svg><use href="#i-paste"/></svg></button>
            <button class="qa sep" aria-label="约束"><svg><use href="#i-con"/></svg></button>
            <i class="caret"></i>
            <button class="qa sep" aria-label="画笔"><svg><use href="#i-pen"/></svg></button>
            <button class="qa sep"><svg><use href="#i-switch"/></svg>切换窗口</button>
            <button class="qa"><svg><use href="#i-window"/></svg>窗口</button>
            <i class="caret"></i>
            <i class="caret bar"></i>
            <h1>NX 12 - 建模</h1>
            <div class="window">
                <b class="siemens">SIEMENS</b>
                <button aria-label="最小化"><svg viewBox="0 0 14 14"><path d="M3 12h8" stroke="#333" stroke-width="2"/></svg></button>
                <button aria-label="还原"><svg viewBox="0 0 14 14"><path d="M4 5V2h9v6h-3M1 6h9v6H1z" fill="none" stroke="#333" stroke-width="1.500"/></svg></button>
                <button aria-label="关闭"><svg viewBox="0 0 14 14"><path d="M2 1l10 11M12 1L2 12" stroke="#333" stroke-width="1.700"/></svg></button>
            </div>
        </header>

        <nav class="tabs">
            <button class="file">文件(F)</button>
            <button class="active">主页</button>
            <button>装配</button>
            <button>曲线</button>
            <button>曲面</button>
            <button>分析</button>
            <button>视图</button>
            <button>渲染</button>
            <button>工具</button>
            <button>应用模块</button>
            <div class="tabs-right">
                <label class="search"><input type="text" placeholder="查找命令" aria-label="查找命令"><svg><use href="#i-find"/></svg></label>
                <button aria-label="全屏"><svg viewBox="0 0 16 16"><path d="M1 4V1h3M12 1h3v3M15 12v3h-3M4 15H1v-3" fill="none" stroke="#555"/><path d="M4 4h8v8H4z" fill="#eef" stroke="#223a78" stroke-width="1.500"/><path d="M4 4h8v3H4z" fill="#2a4a90"/></svg></button>
                <button aria-label="折叠"><svg viewBox="0 0 16 16"><path d="M2 9l6-6 6 6v3L8 7l-6 5z" fill="#fff" stroke="#333" stroke-width="1.200"/></svg></button>
                <button aria-label="帮助"><svg viewBox="0 0 16 16"><circle cx="8" cy="8" r="7.500" fill="#4a66c0"/><path d="M6 6q0-2 2-2t2 2q0 1-2 2v2M8 11v2" fill="none" stroke="#fff" stroke-width="1.600"/></svg></button>
            </div>
        </nav>

        <section class="ribbon">
            <div class="group g-sketch">
                <div class="tools">
                    <div class="stack wide">
                        <button><svg><use href="#i-sketch"/></svg>草图</button>
                        <button><svg><use href="#i-finish"/></svg>完成草图</button>
                    </div>
                    <div class="gallery">
                        <button aria-label="轮廓"><svg><use href="#i-profile"/></svg></button>
                        <button aria-label="矩形"><svg><use href="#i-rect"/></svg></button>
                        <button aria-label="直线"><svg><use href="#i-line"/></svg></button>
                        <button aria-label="圆弧"><svg><use href="#i-arc"/></svg></button>
                        <button aria-label="圆"><svg><use href="#i-circle"/></svg></button>
                        <button aria-label="点"><svg><use href="#i-plus"/></svg></button>
                        <button aria-label="倒斜角"><svg><use href="#i-chamfer"/></svg></button>
                        <button aria-label="圆角"><svg><use href="#i-fillet"/></svg></button>
                        <button aria-label="快速修剪"><svg><use href="#i-trim"/></svg></button>
                        <button aria-label="快速延伸"><svg><use href="#i-trim"/></svg></button>
                        <button aria-label="艺术样条"><svg><use href="#i-plus"/></svg></button>
                        <button aria-label="阵列曲线"><svg><use href="#i-sketch"/></svg></button>
                        <button aria-label="偏置曲线"><svg><use href="#i-conic"/></svg></button>
                        <button aria-label="投影曲线"><svg><use href="#i-conic"/></svg></button>
                    </div>
                    <div class="scroller"><i class="caret up"></i><i class="caret"></i></div>
                    <button class="big quick"><svg><use href="#i-quick"/></svg>快速尺寸</button>
                    <button class="big more"><span><svg><use href="#i-more"/></svg></span>更多</button>
                </div>
            </div>
            <div class="group g-feature">
                <div class="tools">
                    <button class="big plane"><svg><use href="#i-plane"/></svg>基准平面</button>
                    <button class="big"><svg><use href="#i-extrude"/></svg>拉伸<i class="caret"></i></button>
                    <button class="big"><svg><use href="#i-hole"/></svg>孔</button>
                    <div class="stack">
                        <button><svg><use href="#i-pattern"/></svg>阵列特征</button>
                        <button><svg><use href="#i-subtract"/></svg>减去<i class="caret"></i></button>
                        <button><svg><use href="#i-shell"/></svg>抽壳</button>
                    </div>
                    <button class="big edge"><svg><use href="#i-edge"/></svg>边倒圆<i class="caret"></i></button>
                    <div class="stack">
                        <button><svg><use href="#i-chamf"/></svg>倒斜角</button>
                        <button><svg><use href="#i-body"/></svg>修剪体</button>
                        <button><svg><use href="#i-draft"/></svg>拔模</button>
                    </div>
                    <button class="big more"><span><svg><use href="#i-featmore"/></svg></span>更多<i class="caret"></i></button>
                </div>
                <footer><span>特征</span><i class="caret"></i></footer>
            </div>
            <div class="group g-sync">
                <div class="tools">
                    <button class="big face"><svg><use href="#i-moveface"/></svg>移动面</button>
                    <div class="stack">
                        <button aria-label="拉出面"><svg><use href="#i-face2"/></svg></button>
                        <button aria-label="替换面"><svg><use href="#i-face3"/></svg></button>
                        <button aria-label="删除面"><svg><use href="#i-face4"/></svg></button>
                    </div>
                    <button class="big more"><span><svg><use href="#i-sync"/></svg></span>更多<i class="caret"></i></button>
                </div>
                <footer><span>同步建模</span><i class="caret"></i></footer>
            </div>
            <div class="group small g-std">
                <div class="tools">
                    <div class="line"><svg><use href="#i-std"/></svg><svg><use href="#i-layers"/></svg><svg><use href="#i-layers2"/></svg><i></i><svg><use href="#i-hand"/></svg></div>
                    <div class="line"><svg><use href="#i-attr1"/></svg><svg><use href="#i-attr2"/></svg><svg><use href="#i-attr3"/></svg><i></i><svg><use href="#i-export"/></svg></div>
                </div>
                <footer><span>标准化工具...</span><i class="caret"></i></footer>
            </div>
            <div class="group small g-gear">
                <div class="tools">
                    <div class="line"><svg><use href="#i-gear1"/></svg><svg><use href="#i-gear2"/></svg></div>
                    <div class="line"><svg><use href="#i-gear3"/></svg></div>
                </div>
                <footer><span>齿...</span><i class="caret"></i></footer>
            </div>
            <div class="group small g-spring">
                <div class="tools">
                    <div class="line"><svg><use href="#i-spring"/></svg><svg><use href="#i-spring2"/></svg></div>
                    <div class="line"><svg><use href="#i-coil"/></svg><i></i><svg><use href="#i-cutspring"/></svg></div>
                </div>
                <footer><span>弹...</span><i class="caret"></i></footer>
            </div>
            <div class="group small g-gear">
                <div class="tools">
                    <div class="line"><svg><use href="#i-mach"/></svg><svg><use href="#i-mach2"/></svg></div>
                    <div class="line"><svg><use href="#i-grid"/></svg><svg><use href="#i-csys"/></svg></div>
                </div>
                <footer><span>加...</span><i class="caret"></i></footer>
            </div>
            <div class="group small g-model">
                <div class="tools">
                    <div class="line"><svg><use href="#i-tri"/></svg><svg><use href="#i-sheet"/></svg><svg><use href="#i-fplus"/></svg><svg><use href="#i-fgear"/></svg></div>
                    <div class="line"><svg><use href="#i-note"/></svg><svg><use href="#i-dimh"/></svg><i></i><div class="num fit"><svg><use href="#i-fit"/></svg>10H7</div></div>
                </div>
                <footer><span>建模工具 ...</span><i class="caret"></i></footer>
            </div>
            <div class="group small g-tiny">
                <div class="tools">
                    <div class="line"><svg><use href="#i-cubes"/></svg></div>
                    <div class="line"><svg><use href="#i-cubes"/></svg></div>
                </div>
                <footer><span>'.</span><i class="caret"></i></footer>
            </div>
            <div class="group small g-dims">
                <div class="tools">
                    <div class="line">
                        <svg><use href="#i-bracket"/></svg><i></i><svg><use href="#i-xx"/></svg>
                        <div class="num">1.00<em>±.05</em></div>
                        <div class="num">1.00<em>+.05</em></div>
                        <div class="num">1.00<em>+.05</em></div>
                        <div class="num">1.00<em>-.05</em></div>
                        <svg><use href="#i-xbox"/></svg><svg><use href="#i-xpar"/></svg>
                        <div class="num blue">10H7</div>
                        <div class="num blue">10H7<em>(8⁰¹)</em></div>
                        <div class="num blue">10H7<em>(8⁰¹)</em></div>
                        <div class="num blue">10<em>(8⁰¹)</em></div>
                    </div>
                    <div class="line"><svg><use href="#i-leader"/></svg><svg><use href="#i-leader2"/></svg><i></i><svg><use href="#i-dia"/></svg><svg><use href="#i-dia2"/></svg><svg><use href="#i-turn"/></svg></div>
                </div>
                <footer><span>尺寸快速格式化工具 - GC工具箱</span><i class="caret"></i></footer>
            </div>
            <div class="group g-surface">
                <div class="tools">
                    <button class="big"><svg><use href="#i-surface"/></svg>曲面<i class="caret"></i></button>
                </div>
            </div>
            <div class="group g-asm">
                <div class="tools">
                    <div class="pair">
                        <button aria-label="装配窗口"><svg><use href="#i-asmwin"/></svg></button>
                        <button aria-label="添加组件"><svg><use href="#i-addcomp"/></svg></button>
                    </div>
                    <i class="caret"></i>
                    <div class="stack">
                        <button aria-label="镜像装配"><svg><use href="#i-mirror"/></svg></button>
                        <button aria-label="移动组件"><svg><use href="#i-movecomp"/></svg></button>
                        <button aria-label="阵列组件"><svg><use href="#i-asmplus"/></svg></button>
                    </div>
                </div>
                <footer><span>装配</span><i class="caret"></i></footer>
            </div>
            <div class="group g-end">
                <div class="tools"></div>
                <footer><span></span><i class="caret"></i></footer>
            </div>
        </section>

        <section class="selectbar">
            <button class="menu"><svg><use href="#i-menu"/></svg>菜单(<u>M</u>)<i class="caret"></i></button>
            <select aria-label="选择过滤器"><option>无选择过滤器</option></select>
            <div class="snaps">
                <svg><use href="#i-dim1"/></svg><svg><use href="#i-dim2"/></svg><svg><use href="#i-marq"/></svg><i class="caret"></i>
                <svg><use href="#i-graybox"/></svg><svg><use href="#i-bluebox"/></svg>
                <svg class="on"><use href="#i-snap"/></svg><svg class="on"><use href="#i-end"/></svg><svg class="on"><use href="#i-mid"/></svg><svg><use href="#i-ctrl"/></svg><svg class="on"><use href="#i-poly"/></svg><svg class="on"><use href="#i-curve"/></svg><svg class="on"><use href="#i-center"/></svg>
            </div>
            <div class="views">
                <svg><use href="#i-zoomwin"/></svg><svg><use href="#i-layout"/></svg><svg><use href="#i-rot"/></svg><svg><use href="#i-sect"/></svg><svg><use href="#i-comp"/></svg><svg><use href="#i-cal"/></svg><i class="caret"></i><svg><use href="#i-cone"/></svg><i class="caret"></i><svg><use href="#i-bluebox"/></svg><i class="caret"></i><svg><use href="#i-view"/></svg><i class="caret"></i>
            </div>
            <i class="caret last"></i>
        </section>

        <div class="body">
            <aside class="resources">
                <button class="opt" aria-label="选项"><svg><use href="#i-gearset"/></svg></button>
                <button aria-label="装配导航器"><svg><use href="#i-asmnav"/></svg></button>
                <button aria-label="约束导航器"><svg><use href="#i-mirror"/></svg></button>
                <button class="active" aria-label="部件导航器"><svg><use href="#i-partnav"/></svg></button>
                <button aria-label="重用库"><svg><use href="#i-books"/></svg></button>
                <button class="gap" aria-label="HD3D"><svg><use href="#i-info"/></svg></button>
                <button class="gap" aria-label="浏览器"><svg><use href="#i-web"/></svg></button>
                <button class="gap" aria-label="历史记录"><svg><use href="#i-clock"/></svg></button>
                <button aria-label="材料"><svg><use href="#i-wand"/></svg></button>
                <button aria-label="角色"><svg><use href="#i-roles"/></svg></button>
                <button aria-label="加工"><svg><use href="#i-robot"/></svg></button>
            </aside>

            <aside class="navigator">
                <h2>部件导航器</h2>
                <div class="tree">
                    <div class="tree-head">名称<i class="caret up"></i></div>
                    <ul>
                        <li><b class="exp plus"></b><svg><use href="#i-mview"/></svg>模型视图</li>
                        <li><b class="exp plus"></b><svg><use href="#i-check"/></svg><svg><use href="#i-cam"/></svg>摄像机</li>
                        <li><b class="exp plus"></b><svg><use href="#i-folder"/></svg>用户表达式</li>
                        <li><b class="exp plus"></b><svg><use href="#i-folder"/></svg>非时间戳记几何体</li>
                        <li><b class="exp"></b><svg><use href="#i-folder"/></svg>模型历史记录</li>
                        <li class="child"><label><input type="checkbox" checked><svg><use href="#i-csys"/></svg>基准坐标系</label></li>
                        <li class="child bold"><label><input type="checkbox" checked><svg><use href="#i-sk"/></svg>草图 (1) "SI</label></li>
                    </ul>
                    <div class="hscroll">
                        <svg viewBox="0 0 10 12"><path d="M8 1L3 6l5 5" fill="none" stroke="#444" stroke-width="2"/></svg>
                        <span></span>
                        <svg viewBox="0 0 10 12"><path d="M2 1l5 5-5 5" fill="none" stroke="#444" stroke-width="2"/></svg>
                    </div>
                </div>
                <button class="fold">相关性<svg viewBox="0 0 14 12"><path d="M1 1l6 9 6-9" fill="none" stroke="#1b6480" stroke-width="3"/></svg></button>
                <button class="fold">细节<svg viewBox="0 0 14 12"><path d="M1 1l6 9 6-9" fill="none" stroke="#1b6480" stroke-width="3"/></svg></button>
                <button class="fold">预览<svg viewBox="0 0 14 12"><path d="M1 1l6 9 6-9" fill="none" stroke="#1b6480" stroke-width="3"/></svg></button>
            </aside>

            <main class="work">
                <div class="doctabs">
                    <div class="doctab">
                        <svg viewBox="0 0 16 18"><path d="M1 3l6-2v8l4-2 4 2v5l-7 4-7-4z" fill="#2858d0" stroke="#c8dcff"/></svg>
                        _model2.prt
                        <svg viewBox="0 0 12 16" class="mod"><path d="M9 4V2H1v12h8v-3M4 8h7M8 5l3 3-3 3" fill="none" stroke="#fff" stroke-width="1.500"/></svg>
                        <button aria-label="关闭标签">×</button>
                    </div>
                </div>
                <svg class="canvas" viewBox="271 241 1649 814" preserveAspectRatio="xMidYMid slice">
                    <defs>
                        <polygon id="arcs" points="246,0 244,34 238,67 227,99 213,129 195,157 174,182 150,205 123,223 94,238 64,249 32,256 0,258 -32,256 -64,249 -94,238 -123,223 -150,205 -174,182 -195,157 -213,129 -227,99 -238,67 -244,34 -246,0 -244,-34 -238,-67 -227,-99 -213,-129 -195,-157 -174,-182 -150,-205 -123,-223 -94,-238 -64,-249 -32,-256 0,-258 32,-256 64,-249 94,-238 123,-223 150,-205 174,-182 195,-157 213,-129 227,-99 238,-67 244,-34"/>
                        <path id="tip" d="M0 0l-12 -3v6z"/>
                        <filter id="soft"><feGaussianBlur stdDeviation="1"/></filter>
                    </defs>

                    <!-- dimensions -->
                    <g class="dim">
                        <path d="M573 323L1006 241"/>
                        <path d="M733 343h50M733 581h317M747 343v238"/>
                        <path d="M838 387L598 679M752 393L1016 629"/>
                        <path d="M791 638v319M814 885v72M763 943h79M822 878h70M877 638v240M833 638h60"/>
                        <path class="dark" d="M730 712l37-45M832 592l21-26"/>
                        <g class="tips">
                            <use href="#tip" transform="translate(747 343) rotate(-90)"/>
                            <use href="#tip" transform="translate(747 581) rotate(90)"/>
                            <use href="#tip" transform="translate(838 387) rotate(-51)"/>
                            <use href="#tip" transform="translate(598 679) rotate(129)"/>
                            <use href="#tip" transform="translate(752 393) rotate(222)"/>
                            <use href="#tip" transform="translate(1016 629) rotate(42)"/>
                            <use href="#tip" transform="translate(877 642) rotate(-90)"/>
                            <use href="#tip" transform="translate(877 877) rotate(90)"/>
                            <use href="#tip" transform="translate(791 943)"/>
                            <use href="#tip" transform="translate(815 943) rotate(180)"/>
                            <use href="#tip" transform="translate(730 712) rotate(130)"/>
                            <use href="#tip" transform="translate(853 566) rotate(-51)"/>
                        </g>
                        <text transform="translate(743 460) rotate(-90)">166.5</text>
                        <text transform="translate(715 531) rotate(-51)">272.7</text>
                        <text transform="translate(883 505) rotate(42)">255</text>
                        <text transform="translate(872 757) rotate(-90)">166.5</text>
                        <text x="804" y="939">16.5</text>
                        <g class="phi"><circle cx="778" cy="653" r="6"/><path d="M773 663l10-20"/></g>
                    </g>

                    <!-- reference circle and datum square -->
                    <ellipse cx="791" cy="639" rx="94" ry="99" fill="none" stroke="#85857a" stroke-width="2" stroke-dasharray="14 5 4 5 4 5"/>
                    <path d="M674 638h117M724 638v-69h67" fill="none" stroke="#3c36b4" stroke-width="1.500"/>
                    <path d="M749 595h84v88h-84z" fill="#7c9cbc" fill-opacity=".5" stroke="#2b9be4" stroke-width="2"/>
                    <path d="M791 638v45" stroke="#6a86a4"/>

                    <!-- sketch curves -->
                    <g class="curve">
                        <use href="#arcs" x="791" y="282"/>
                        <use href="#arcs" x="791" y="996"/>
                        <use href="#arcs" x="451" y="639"/>
                        <use href="#arcs" x="1132" y="639"/>
                        <path d="M791 343l266 238-243 297-265-239z"/>
                    </g>
                    <g class="corner">
                        <path d="M784 352l8 7 8-7M557 631l7 8-7 8M1049 574l-8 7 8 8M807 871l7-8 8 8"/>
                    </g>
                    <circle cx="791" cy="343" r="6" fill="#555"/>
                    <circle cx="814" cy="878" r="6" fill="#555"/>
                    <g fill="#1010e0">
                        <circle cx="791" cy="343" r="4"/>
                        <circle cx="814" cy="878" r="4"/>
                        <circle cx="549" cy="639" r="4"/>
                        <circle cx="1057" cy="581" r="4"/>
                        <circle cx="791" cy="282" r="3"/>
                        <circle cx="451" cy="639" r="3"/>
                        <circle cx="1132" cy="639" r="3"/>
                        <circle cx="791" cy="996" r="3"/>
                    </g>
                    <circle cx="791" cy="282" r="6" fill="none" stroke="#4a62d0"/>
                    <circle cx="461" cy="885" r="9" fill="none" stroke="#3c60c8" stroke-width="5" stroke-linecap="round" stroke-dasharray="0 7"/>

                    <!-- axes -->
                    <path d="M791 290v198" stroke="#333a66" stroke-dasharray="2 2"/>
                    <path d="M791 512v56" stroke="#2a4a9c" stroke-width="1.500"/>
                    <path d="M791 500l4 17h-8zM658 638l17-4v8z" fill="#1c1ca8"/>
                    <text class="axis" x="791" y="498">X</text>
                    <text class="axis" x="651" y="644">Y</text>
                    <path d="M791 556l5 18h-3v30h-4v-30h-3z" fill="#1b8a8a"/>
                    <path d="M830 636h24v-3l18 5-18 5v-3h-24z" fill="#cc4040"/>
                    <text class="axis red" x="882" y="644">X</text>

                    <!-- cursor -->
                    <circle cx="809" cy="616" r="31" fill="#f8f400" filter="url(#soft)"/>
                    <circle cx="808" cy="614" r="7" fill="#a8a060"/>
                    <circle cx="805" cy="609" r="12" fill="none" stroke="#222" stroke-width="1.500" stroke-dasharray="13 6" stroke-dashoffset="-3"/>
                    <path d="M804 593h2v15h15v2h-15v16h-2v-16h-14v-2h14z" fill="#fff" stroke="#222"/>

                    <!-- view triad -->
                    <path d="M308 960h26v28h-26z" fill="#ccc" stroke="#b2b2b2"/>
                    <path d="M333 988v-36h-2l3-13 3 13h-2v36z" fill="#c8323c" stroke="#c8323c"/>
                    <path d="M334 988h-30v3l-12-3 12-3v3" fill="#2c8a3c" stroke="#2c8a3c"/>
                    <circle cx="334" cy="987" r="4" fill="#2040d0"/>
                    <text class="triad x" x="334" y="942">X</text>
                    <text class="triad y" x="286" y="992">Y</text>

                    <!-- logo -->
                    <g transform="translate(1829 986)">
                        <path d="M0-27l24 13v28L0 28l-24-14v-28zM-24 14l9-5M24 14l-9-5M0-27v8" fill="none" stroke="#1d4f98" stroke-width="2"/>
                        <path d="M0-19l15 8v20L0 18l-15-9v-20z" fill="#ee4438"/>
                        <path d="M0-19l15 8v20L0 18l-15-9v-20zM-15-11L0-4l15-7M0-4v22" fill="none" stroke="#1d4f98" stroke-width="2"/>
                        <text class="cube" x="-13" y="9">N</text>
                        <text class="cube" x="3" y="9">C</text>
                        <path d="M-6-12l7-4 7 4-3 2" fill="none" stroke="#fff" stroke-width="2"/>
                        <text class="zh" x="32" y="-8">智</text>
                        <text class="zh" x="32" y="6">造</text>
                        <text class="zh" x="32" y="20">界</text>
                        <text class="reg" x="48" y="-8">®</text>
                        <text class="brand" x="-59" y="52"><tspan fill="#ee4438">C</tspan>NCSST</text>
                        <path d="M-60 50q60-8 114-2" fill="none" stroke="#1d4f98" stroke-width="2"/>
                    </g>
                </svg>
            </main>
        </div>

        <footer class="status">
            <span>选择要约束到的对象</span>
            <span class="mid">草图已被 5 个自动尺寸完全约束</span>
            <div class="ime"><i></i><span class="boxed">拼</span><span>中</span><span>♪</span><span>°,</span><span>简</span><svg><use href="#i-gearset"/></svg><span>:</span></div>
        </footer>

        <form class="dialog">
            <header>
                <svg><use href="#i-gearset"/></svg>
                <h2>几何约束</h2>
                <button type="button" aria-label="重置"><svg viewBox="0 0 16 16"><path d="M4 4a6 6 0 1 0 8 0M4 9V4h-3" fill="none" stroke="#fff" stroke-width="1.700"/></svg></button>
                <button type="button" aria-label="关闭"><svg viewBox="0 0 16 16"><path d="M3 2l10 12M13 2L3 14" stroke="#fff" stroke-width="2"/></svg></button>
            </header>
            <section>
                <h3>约束<svg viewBox="0 0 14 12"><path d="M1 11l6-9 6 9" fill="none" stroke="#1b6480" stroke-width="3"/></svg></h3>
                <div class="cons">
                    <button type="button" aria-label="重合"><svg><use href="#c-coin"/></svg></button>
                    <button type="button" class="on" aria-label="点在曲线上"><svg><use href="#c-on"/></svg></button>
                    <button type="button" aria-label="相切"><svg><use href="#c-tan"/></svg></button>
                    <button type="button" aria-label="平行"><svg><use href="#c-par"/></svg></button>
                    <button type="button" aria-label="垂直"><svg><use href="#c-perp"/></svg></button>
                    <button type="button" aria-label="水平"><svg><use href="#c-hor"/></svg></button>
                    <button type="button" aria-label="竖直"><svg><use href="#c-ver"/></svg></button>
                    <button type="button" aria-label="水平对齐"><svg><use href="#c-hal"/></svg></button>
                    <button type="button" aria-label="竖直对齐"><svg><use href="#c-val"/></svg></button>
                    <button type="button" aria-label="中点"><svg><use href="#c-midp"/></svg></button>
                    <button type="button" aria-label="共线"><svg><use href="#c-col"/></svg></button>
                    <button type="button" aria-label="同心"><svg><use href="#c-conc"/></svg></button>
                    <button type="button" aria-label="等长"><svg><use href="#c-eq"/></svg></button>
                    <button type="button" aria-label="等半径"><svg><use href="#c-eqr"/></svg></button>
                </div>
            </section>
            <section class="geometry">
                <h3>要约束的几何体<svg viewBox="0 0 14 12"><path d="M1 11l6-9 6 9" fill="none" stroke="#1b6480" stroke-width="3"/></svg></h3>
                <div class="pick">
                    <p><svg><use href="#i-check"/></svg>选择要约束的对象 (2)</p>
                    <button type="button" aria-label="选择要约束的对象"><svg><use href="#i-target"/></svg></button>
                </div>
                <div class="pick current">
                    <p><svg><use href="#i-star"/></svg>选择要约束到的对象 (0)</p>
                    <button type="button" aria-label="选择要约束到的对象"><svg><use href="#i-target"/></svg></button>
                </div>
                <label class="auto"><input type="checkbox">自动选择递进</label>
            </section>
            <section class="closed">
                <h3>设置<svg viewBox="0 0 14 12"><path d="M1 1l6 9 6-9" fill="none" stroke="#1b6480" stroke-width="3"/></svg></h3>
            </section>
            <div class="actions"><button type="button">关闭</button></div>
        </form>
    </div>
</body>
</html>
```

FILE: styles.css
```css
* {
    box-sizing: border-box;
}
body {
    margin: 0;
    font-family: "Noto Sans", "Noto Sans CJK SC", sans-serif;
    font-size: 14px;
    line-height: 20px;
    color: #222;
    background-color: #fff;
}
h1, h2, h3, p, ul {
    margin: 0;
    padding: 0;
    font-weight: normal;
}
button {
    padding: 0;
    border: none;
    background: none;
    font: inherit;
    color: inherit;
    white-space: nowrap;
    cursor: pointer;
}
svg {
    display: block;
    flex: none;
}
.sprite {
    position: absolute;
    width: 0;
    height: 0;
}
.app {
    position: relative;
    display: flex;
    flex-direction: column;
    height: 100vh;
    overflow: hidden;
}
.caret {
    flex: none;
    width: 0;
    height: 0;
    border: 4px solid transparent;
    border-top: 5px solid #222;
    border-bottom: none;
}
.caret.up {
    border-top: none;
    border-bottom: 5px solid #222;
}

/* title bar */
.titlebar {
    position: relative;
    display: flex;
    align-items: center;
    height: 32px;
    padding-left: 4px;
}
.logo {
    width: 42px;
    font: bold 26px "Liberation Sans", sans-serif;
    color: #999;
}
.qa {
    display: flex;
    align-items: center;
    gap: 4px;
    height: 28px;
    padding: 0 4px;
}
.qa.sep {
    padding-left: 7px;
    border-left: 1px solid #ddd;
}
.qa.save {
    margin-right: 7px;
}
.qa svg {
    width: 16px;
    height: 18px;
}
.titlebar .caret {
    margin: 0 3px;
}
.caret.bar::before {
    content: "";
    position: absolute;
    width: 8px;
    height: 2px;
    margin: -9px 0 0 -4px;
    background-color: #222;
}
.titlebar h1 {
    position: absolute;
    left: 0;
    right: 0;
    padding-left: 284px;
    text-align: center;
    font-size: 15px;
    pointer-events: none;
}
.window {
    display: flex;
    align-items: center;
    gap: 15px;
    margin-left: auto;
    padding-right: 10px;
}
.window svg {
    width: 14px;
    height: 14px;
}
.siemens {
    margin-right: 13px;
    font-size: 16px;
    color: #0a9191;
}

/* tabs */
.tabs {
    display: flex;
    height: 33px;
    background-color: #dcdcdc;
    font-size: 16px;
}
.tabs > button {
    padding: 0 13px;
}
.tabs .file {
    width: 91px;
    margin-right: 2px;
    background-color: #569fb8;
    color: #fff;
}
.tabs .active {
    background-color: #fff;
    color: #1b6480;
}
.tabs-right {
    display: flex;
    align-items: center;
    gap: 11px;
    margin-left: auto;
    padding-right: 8px;
}
.tabs-right > button svg {
    width: 16px;
    height: 16px;
}
.search {
    display: flex;
    align-items: center;
    width: 157px;
    height: 26px;
    border: 1px solid #999;
    background-color: #fff;
}
.search input {
    width: 134px;
    border: none;
    outline: none;
    font: inherit;
    font-size: 14px;
}
.search input::placeholder {
    color: #aaa;
}
.search svg {
    width: 16px;
    height: 18px;
}

/* ribbon */
.ribbon {
    display: flex;
    height: 111px;
    padding-top: 3px;
    border-bottom: 1px solid #ccc;
}
.group {
    display: flex;
    flex-direction: column;
    flex: none;
    border-right: 1px solid #ddd;
}
.group .tools {
    display: flex;
    height: 87px;
}
.group footer {
    display: flex;
    align-items: center;
    height: 18px;
    padding: 0 9px 0 2px;
    color: #1b6480;
}
.group footer span {
    flex: 1;
    text-align: center;
    white-space: nowrap;
}
.small footer span {
    text-align: left;
}
.small.g-dims footer span {
    text-align: center;
}
.g-sketch { width: 524px; }
.g-feature { width: 411px; }
.g-sync { width: 133px; }
.g-std { width: 104px; }
.g-gear { width: 52px; }
.g-spring { width: 58px; }
.g-model { width: 98px; }
.g-tiny { width: 29px; }
.g-dims { width: 288px; }
.g-surface { width: 43px; }
.g-asm { width: 87px; }
.g-end { flex: 1; border-right: none; }

.g-feature .tools {
    padding-left: 11px;
}
.g-sync .tools {
    padding-left: 2px;
}
.big {
    display: flex;
    flex-direction: column;
    align-items: center;
    width: 41px;
    padding-top: 3px;
}
.big svg {
    width: 32px;
    height: 32px;
    margin-bottom: 6px;
}
.big .caret {
    margin-top: 5px;
}
.big.plane { width: 62px; }
.big.edge { width: 47px; }
.big.face { width: 60px; }
.big.quick { width: 80px; }
.big.more {
    width: 44px;
    padding-top: 2px;
}
.big.more span {
    display: flex;
    align-items: center;
    justify-content: center;
    width: 38px;
    height: 36px;
    margin-bottom: 3px;
    border: 1px solid #ddd;
}
.big.more svg {
    width: 16px;
    height: 18px;
    margin: 0;
}
.stack {
    display: flex;
    flex-direction: column;
}
.stack button {
    display: flex;
    align-items: center;
    gap: 5px;
    height: 27px;
    padding: 0 6px;
}
.stack svg {
    width: 16px;
    height: 18px;
}
.stack .caret {
    margin-left: 4px;
}
.g-sync .stack button {
    padding: 0 9px 0 0;
}
.stack.wide {
    width: 109px;
    padding: 2px 0 0 6px;
}
.stack.wide button {
    height: 40px;
}
.stack.wide svg {
    width: 24px;
    height: 26px;
}
.gallery {
    display: grid;
    grid-template-columns: repeat(7, 39px);
    grid-auto-rows: 40px;
    width: 273px;
    height: 82px;
    margin-top: 2px;
    border: 1px solid #ccc;
}
.gallery button {
    display: grid;
    place-items: center;
}
.gallery svg {
    width: 22px;
    height: 22px;
}
.scroller {
    display: flex;
    flex-direction: column;
    gap: 22px;
    width: 20px;
    padding: 13px 6px;
}
.scroller .up {
    border-bottom-color: #999;
}
.small .tools {
    display: block;
    padding: 4px 0 0 4px;
}
.line {
    display: flex;
    align-items: center;
    gap: 5px;
    height: 32px;
    padding-left: 2px;
}
.line svg {
    width: 18px;
    height: 18px;
}
.line i {
    width: 1px;
    height: 18px;
    margin: 0 -1px;
    background-color: #ccc;
}
.line i + svg {
    margin-left: 1px;
}
.num {
    width: 18px;
    font: 8px "Liberation Sans", sans-serif;
    line-height: 9px;
    text-align: center;
    white-space: nowrap;
}
.num em {
    display: block;
    font-style: normal;
    color: #b4344a;
}
.num.blue, .num.blue em {
    color: #3a30b8;
}
.num.fit {
    margin-left: 3px;
    color: #7a2f36;
}
.num.fit svg {
    height: 9px;
}
.g-surface .big {
    width: 42px;
}
.g-asm .tools {
    align-items: center;
    padding-left: 12px;
}
.pair {
    width: 24px;
}
.pair svg {
    width: 24px;
    height: 24px;
    margin: 7px 0;
}
.g-asm .tools > .caret {
    margin: 34px 7px 0;
}
.g-asm .stack button {
    padding: 0;
}
.g-asm .stack {
    align-self: flex-start;
    margin-left: 2px;
}

/* selection bar */
.selectbar {
    display: flex;
    align-items: center;
    height: 38px;
    padding-top: 2px;
    border-bottom: 2px solid #999;
}
.menu {
    display: flex;
    align-items: center;
    width: 101px;
    height: 30px;
    padding-left: 10px;
    border-right: 1px solid #ddd;
}
.menu svg {
    width: 16px;
    height: 18px;
    margin-right: 5px;
}
.menu .caret {
    margin-left: 5px;
}
.selectbar select {
    width: 160px;
    height: 25px;
    margin-left: 11px;
    padding: 0 0 0 2px;
    border: 1px solid #888;
    background-color: #fff;
    font: inherit;
    color: inherit;
    appearance: none;
}
.snaps {
    display: flex;
    align-items: center;
    gap: 1px;
    height: 30px;
    margin-left: 308px;
    padding-right: 9px;
    border-right: 1px solid #ddd;
}
.snaps svg, .views svg {
    width: 24px;
    height: 24px;
    padding: 3px;
}
.snaps .on {
    background-color: #cfe6e8;
}
.snaps .caret {
    margin: 0 2px;
}
.views {
    display: flex;
    align-items: center;
    gap: 1px;
    height: 30px;
    padding: 0 11px 0 7px;
    border-right: 1px solid #ddd;
}
.views .caret {
    margin: 0 1px 0 2px;
}
.selectbar .last {
    margin: 12px 7px 0 auto;
}

/* body */
.body {
    display: grid;
    grid-template-columns: 33px 238px 1fr;
    flex: 1;
    min-height: 0;
}
.resources {
    display: flex;
    flex-direction: column;
    border-right: 1px solid #999;
    background-color: #dcdcdc;
}
.resources button {
    display: grid;
    place-items: center;
    flex: none;
    height: 43px;
    margin-left: 2px;
}
.resources svg {
    width: 24px;
    height: 24px;
}
.resources .opt {
    height: 26px;
    margin: 0 4px 20px 0;
}
.resources .opt svg {
    width: 15px;
    height: 15px;
}
.resources .active {
    margin-right: -1px;
    border: 1px solid #bbb;
    border-right: none;
    background-color: #fff;
}
.resources .gap {
    margin-top: 14px;
}
.navigator {
    display: flex;
    flex-direction: column;
    min-height: 0;
    padding: 0 9px 6px 5px;
    border-right: 1px solid #888;
    font-size: 15px;
}
.navigator h2 {
    height: 32px;
    padding-left: 4px;
    font-size: 15px;
    line-height: 34px;
}
.tree {
    display: flex;
    flex-direction: column;
    flex: 1;
    min-height: 0;
    border: 1px solid #ddd;
    border-bottom: 5px double #999;
}
.tree-head {
    display: flex;
    align-items: center;
    gap: 18px;
    height: 26px;
    padding-left: 7px;
    background-color: #efefef;
    border-bottom: 1px solid #ccc;
}
.tree-head .caret {
    border-width: 0 6px 7px;
}
.tree ul {
    flex: 1;
    overflow: hidden;
    list-style: none;
    background: linear-gradient(to right, transparent 199px, #e8e8e8 199px, #e8e8e8 200px, transparent 200px),
        repeating-linear-gradient(#fff 0, #fff 24px, #e6e6e6 24px, #e6e6e6 25px, #f9f9f9 25px, #f9f9f9 49px, #e6e6e6 49px, #e6e6e6 50px);
}
.tree li {
    display: flex;
    align-items: center;
    gap: 3px;
    height: 25px;
    padding-left: 5px;
    white-space: nowrap;
}
.tree li svg {
    width: 16px;
    height: 16px;
}
.tree .exp {
    width: 11px;
    height: 11px;
    margin-right: 2px;
    border: 1px solid #ccc;
    background: linear-gradient(#333, #333) center / 7px 1px no-repeat #fff;
}
.tree .exp.plus {
    background: linear-gradient(#333, #333) center / 7px 1px no-repeat,
        linear-gradient(#333, #333) center / 1px 7px no-repeat #fff;
}
.tree .child {
    padding-left: 41px;
}
.tree .child label {
    display: flex;
    align-items: center;
    gap: 2px;
}
.tree .bold {
    font-weight: bold;
}
.tree input {
    position: relative;
    width: 13px;
    height: 13px;
    margin: 0;
    border: 1px solid #222;
    background-color: #fff;
    appearance: none;
}
.tree input::after {
    content: "";
    position: absolute;
    inset: 1px;
    background-color: #27b04a;
    clip-path: polygon(0 50%, 20% 35%, 40% 60%, 85% 0, 100% 15%, 40% 100%);
}
.hscroll {
    display: flex;
    align-items: center;
    height: 22px;
    margin-bottom: 2px;
    padding: 0 7px;
    background-color: #efefef;
}
.hscroll svg {
    width: 9px;
    height: 12px;
}
.hscroll span {
    width: 96px;
    height: 20px;
    margin: 0 auto 0 7px;
    background-color: #cacaca;
}
.fold {
    display: flex;
    align-items: center;
    justify-content: space-between;
    height: 29px;
    padding: 2px 6px 0 7px;
    border-bottom: 1px solid #bbb;
    font-size: 18px;
    color: #1b6480;
}
.fold svg, .dialog h3 svg {
    width: 14px;
    height: 12px;
}

/* graphics window */
.work {
    display: flex;
    flex-direction: column;
    min-width: 0;
    min-height: 0;
}
.doctabs {
    display: flex;
    height: 27px;
    padding-left: 306px;
    border-bottom: 2px solid #569fb8;
}
.doctab {
    display: flex;
    align-items: center;
    gap: 5px;
    padding: 0 5px 0 6px;
    background-color: #569fb8;
    color: #fff;
    font-size: 16px;
}
.doctab svg {
    width: 15px;
    height: 17px;
}
.doctab .mod {
    width: 10px;
    height: 14px;
}
.doctab button {
    font-size: 18px;
    color: #a9b8bd;
}
.canvas {
    flex: 1;
    width: 100%;
    min-height: 0;
    background: linear-gradient(#b2b3b4, #d7d8d9 48%, #e4e6e8 68%, #e6e8ea);
}
.curve {
    fill: none;
    stroke: #1208d8;
    stroke-width: 2;
}
.corner {
    fill: none;
    stroke: #3a5cae;
    stroke-width: 2;
}
.dim {
    fill: none;
    stroke: #7f9cc0;
    stroke-width: 1;
}
.dim path:first-child {
    stroke: #5566c0;
}
.dim .dark {
    stroke: #4a66a8;
}
.dim .tips {
    fill: #6f92c8;
    stroke: none;
}
.dim text {
    fill: #7f9cc8;
    stroke: none;
    font: 14px "Liberation Sans", sans-serif;
    text-anchor: middle;
}
.dim .phi {
    stroke: #5672a4;
}
.dim .phi path:first-child, .dim .phi circle {
    stroke: #5672a4;
}
.axis {
    fill: #2c22b0;
    font-size: 16px;
    text-anchor: middle;
}
.axis.red {
    fill: #b8505c;
}
.triad {
    font-size: 14px;
    text-anchor: middle;
}
.triad.x {
    fill: #c8525a;
}
.triad.y {
    fill: #3c7a4c;
}
.cube {
    fill: #fff;
    font: bold 14px "Liberation Sans", sans-serif;
}
.zh {
    fill: #ee4438;
    font-size: 13px;
}
.reg {
    fill: #ee4438;
    font-size: 15px;
}
.brand {
    fill: #1d4f98;
    font: italic bold 31px "Liberation Sans", sans-serif;
}

/* status bar */
.status {
    position: relative;
    display: flex;
    align-items: center;
    height: 25px;
    padding-left: 3px;
    border-top: 1px solid #999;
    font-weight: 500;
    color: #111;
}
.status .mid {
    position: absolute;
    left: 0;
    right: 0;
    padding-left: 91px;
    text-align: center;
}
.ime {
    position: absolute;
    right: 0;
    bottom: 0;
    display: flex;
    align-items: center;
    gap: 5px;
    width: 185px;
    height: 28px;
    background-color: #fff;
    font-size: 19px;
    font-weight: bold;
}
.ime i {
    height: 22px;
    margin-right: 3px;
    border-left: 2px dotted #aaa;
}
.ime span {
    width: 20px;
    text-align: center;
}
.ime .boxed {
    border: 1px solid #333;
    font-size: 16px;
    line-height: 18px;
}
.ime svg {
    width: 19px;
    height: 19px;
}

/* constraint dialog */
.dialog {
    position: absolute;
    left: 193px;
    top: 123px;
    width: 380px;
    padding-bottom: 11px;
    border: 1px solid #ddd;
    border-top: none;
    background-color: #efefef;
}
.dialog > header {
    display: flex;
    align-items: center;
    gap: 9px;
    height: 28px;
    margin: 0 -1px 2px;
    padding: 0 9px 0 8px;
    background-color: #569fb8;
    color: #fff;
}
.dialog > header svg {
    width: 15px;
    height: 15px;
}
.dialog h2 {
    flex: 1;
    font-size: 18px;
}
.dialog section {
    margin: 0 5px 4px;
    padding: 0 9px 9px;
    background-color: #fff;
    box-shadow: 0 1px 1px #bbb;
}
.dialog h3 {
    display: flex;
    align-items: center;
    justify-content: space-between;
    height: 34px;
    margin: 0 -2px;
    font-size: 18px;
    color: #1b6480;
}
.cons {
    display: grid;
    grid-template-columns: repeat(7, 34px);
    grid-auto-rows: 34px;
    row-gap: 2px;
    height: 82px;
    margin-top: 3px;
    padding: 5px 3px;
    border: 1px solid #ddd;
    background-color: #efefef;
}
.cons button {
    display: grid;
    place-items: center;
}
.cons .on {
    background-color: #8cc0d0;
}
.cons svg {
    width: 22px;
    height: 22px;
}
.dialog .geometry {
    padding-bottom: 6px;
}
.geometry h3 {
    height: 30px;
    margin-bottom: 5px;
}
.pick {
    display: flex;
    gap: 2px;
    height: 35px;
    padding-bottom: 1px;
}
.pick p {
    display: flex;
    align-items: center;
    gap: 5px;
    flex: 1;
    padding-left: 1px;
    font-size: 15px;
}
.pick p svg {
    width: 13px;
    height: 14px;
}
.pick button {
    display: grid;
    place-items: center;
    width: 32px;
    border: 1px solid #bbb;
}
.pick button svg {
    width: 20px;
    height: 20px;
}
.pick.current p, .pick.current button {
    background-color: #ffe07a;
}
.pick.current button {
    border: 3px solid #ffe07a;
    outline: 1px dotted #333;
    outline-offset: -3px;
}
.auto {
    display: flex;
    align-items: center;
    gap: 5px;
    height: 28px;
    font-size: 15px;
}
.auto input {
    width: 18px;
    height: 19px;
    margin: 0;
    border: 1px solid #333;
    appearance: none;
}
.dialog .closed {
    padding-bottom: 0;
}
.closed h3 {
    height: 30px;
}
.actions {
    padding: 8px 15px 0;
    text-align: right;
}
.actions button {
    width: 60px;
    height: 29px;
    background-color: #78b6c8;
    color: #fff;
    font-size: 15px;
}
```
